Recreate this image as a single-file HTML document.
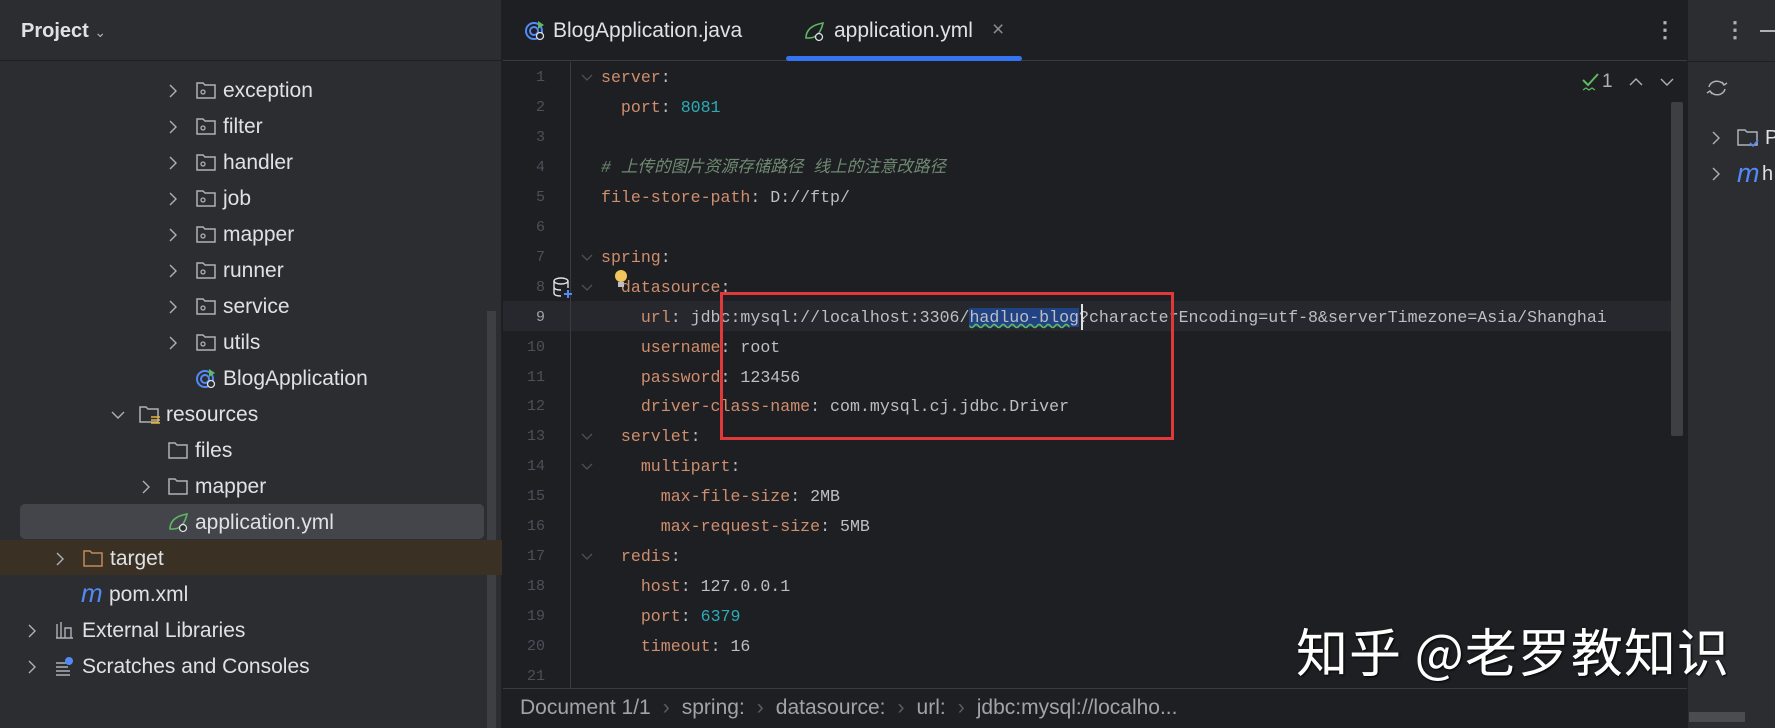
<!DOCTYPE html>
<html><head><meta charset="utf-8"><style>
*{margin:0;padding:0;box-sizing:border-box}
body{width:1775px;height:728px;overflow:hidden;background:#1e1f22;font-family:"Liberation Sans","Noto Sans CJK SC",sans-serif;color:#dfe1e5;position:relative}
.abs{position:absolute}
#left{left:0;top:0;width:502px;height:728px;background:#2b2d30;border-right:1px solid #1e1f22}
.hdr{left:0;top:0;width:502px;height:61px;border-bottom:1px solid #1e1f22}
.row{position:absolute;height:36px;line-height:36px;font-size:21px;color:#dfe1e5;white-space:nowrap}
.code{font-family:"Liberation Mono","Noto Sans CJK SC",monospace;font-size:16.6px;white-space:pre;position:absolute;left:601px;height:30px;line-height:30px}
.ln{position:absolute;width:40px;left:505px;text-align:right;font-family:"Liberation Mono",monospace;font-size:15px;color:#4b5059;height:30px;line-height:30px}
.k{color:#cf8e6d}.v{color:#bcbec4}.n{color:#2aacb8}.c{color:#6f8a73;font-style:italic}
.sep{color:#5a5d63;margin:0 12px}
</style></head><body>
<div id="left" class="abs"></div>
<div class="abs hdr"></div>
<div class="abs" style="left:21px;top:20px;font-size:20px;font-weight:bold;color:#dfe1e5">Project <span style="font-weight:normal;font-size:14px;color:#aeb1b8">&#8964;</span></div>
<div class="abs" style="left:487px;top:311px;width:9px;height:417px;background:#3d3f43"></div>
<div class="abs" style="left:20px;top:504px;width:464px;height:35px;background:#43454a;border-radius:5px"></div>
<div class="abs" style="left:0;top:540px;width:502px;height:35px;background:#3a3024"></div>

<div id="tree"></div>
<script>
const items=[
["exception",91,173,223,"pkg",1],["filter",127,173,223,"pkg",1],["handler",163,173,223,"pkg",1],["job",199,173,223,"pkg",1],["mapper",235,173,223,"pkg",1],["runner",271,173,223,"pkg",1],["service",307,173,223,"pkg",1],["utils",343,173,223,"pkg",1],
["BlogApplication",379,0,223,"app",0],["resources",415,118,166,"res",2],["files",451,0,195,"dir",0],["mapper",487,146,195,"dir",1],["application.yml",523,0,195,"yml",0],
["target",559,60,110,"tdir",1],["pom.xml",595,0,109,"m",0],["External Libraries",631,32,82,"lib",1],["Scratches and Consoles",667,32,82,"scr",1]];
let h='';
for(const [t,y,cx,tx,ic,ch] of items){
 const top=y-18;
 if(ch==1)h+=`<svg class="abs" style="left:${cx-6}px;top:${top+11}px" width="12" height="14"><path d="M3 1l6 6-6 6" fill="none" stroke="#aeb1b8" stroke-width="1.4"/></svg>`;
 if(ch==2)h+=`<svg class="abs" style="left:${cx-7}px;top:${top+12}px" width="14" height="12"><path d="M1 3l6 6 6-6" fill="none" stroke="#aeb1b8" stroke-width="1.4"/></svg>`;
 let s='';
 if(ic=="pkg")s=`<path d="M2 4h6l2 2h10v13H2z" fill="none" stroke="#aeb1b8" stroke-width="1.5"/><circle cx="8" cy="13" r="2" fill="none" stroke="#aeb1b8" stroke-width="1.3"/>`;
 if(ic=="dir"||ic=="res")s=`<path d="M2 4h6l2 2h10v13H2z" fill="none" stroke="#aeb1b8" stroke-width="1.5"/>`+(ic=="res"?`<path d="M13 14h9M13 17h9M13 20h9" stroke="#e3b341" stroke-width="1.6"/>`:'');
 if(ic=="tdir")s=`<path d="M2 4h6l2 2h10v13H2z" fill="none" stroke="#c08a5d" stroke-width="1.5"/>`;
 if(ic=="app")s=`<circle cx="10" cy="12" r="8" fill="none" stroke="#548af7" stroke-width="2"/><circle cx="10" cy="12" r="4" fill="none" stroke="#548af7" stroke-width="2"/><path d="M14 2l6 4-6 4z" fill="#5fb865"/><circle cx="16" cy="17" r="3.5" fill="#2b2d30" stroke="#dfe1e5" stroke-width="1.3"/>`;
 if(ic=="yml")s=`<path d="M3 18c0-8 6-13 17-15-2 9-6 15-14 15z" fill="none" stroke="#5fb865" stroke-width="1.6"/><circle cx="16" cy="17" r="3.5" fill="#2b2d30" stroke="#dfe1e5" stroke-width="1.3"/>`;
 if(ic=="m")s=`<text x="0" y="19" font-family="Liberation Sans" font-style="italic" font-size="26" fill="#548af7">m</text>`;
 if(ic=="lib")s=`<path d="M3 5v14M7 3v16M11 9h6v10h-6zM2 19h17" fill="none" stroke="#aeb1b8" stroke-width="1.4"/>`;
 if(ic=="scr")s=`<path d="M2 8h10M2 12h12M2 16h14M2 20h14" stroke="#aeb1b8" stroke-width="1.5"/><circle cx="15" cy="6" r="4" fill="#548af7"/>`;
 h+=`<svg class="abs" style="left:${tx-28}px;top:${top+6}px" width="26" height="24">${s}</svg>`;
 h+=`<div class="row" style="left:${tx}px;top:${top}px">${t}</div>`;
}
document.getElementById('tree').innerHTML=h;
</script>

<div class="abs" style="left:503px;top:0;width:1184px;height:61px;background:#1e1f22;border-bottom:1px solid #393b40"></div>
<svg class="abs" style="left:523px;top:19px" width="24" height="24"><circle cx="11" cy="12" r="8" fill="none" stroke="#548af7" stroke-width="2"/><circle cx="11" cy="12" r="4" fill="none" stroke="#548af7" stroke-width="2"/><path d="M15 2l6 4-6 4z" fill="#5fb865"/><circle cx="17" cy="17" r="3.5" fill="#1e1f22" stroke="#dfe1e5" stroke-width="1.3"/></svg>
<div class="abs" style="left:553px;top:19px;font-size:21px;color:#dfe1e5">BlogApplication.java</div>
<svg class="abs" style="left:803px;top:19px" width="26" height="24"><path d="M3 19c0-8 6-13 17-15-2 9-6 15-14 15z" fill="none" stroke="#5fb865" stroke-width="1.6"/><circle cx="16" cy="18" r="3.5" fill="#1e1f22" stroke="#dfe1e5" stroke-width="1.3"/></svg>
<div class="abs" style="left:834px;top:19px;font-size:21px;color:#dfe1e5">application.yml</div>
<div class="abs" style="left:992px;top:18px;font-size:21px;color:#868a91">×</div>
<div class="abs" style="left:786px;top:56px;width:236px;height:5px;background:#3574f0;border-radius:3px"></div>
<div class="abs" style="left:1654px;top:17px;font-size:22px;color:#aeb1b8;font-weight:bold">⋮</div>

<div class="abs" style="left:503px;top:301px;width:1168px;height:30px;background:#26282e"></div>
<div class="abs" style="left:570px;top:62px;width:1px;height:626px;background:#393b40"></div>
<div class="abs" style="left:1671px;top:102px;width:12px;height:334px;background:#3d3f43;border-radius:2px"></div>
<div id="code"></div>
<script>
const L=[
'<span class="k">server</span><span class="v">:</span>',
'  <span class="k">port</span><span class="v">: </span><span class="n">8081</span>',
'',
'<span class="c"># 上传的图片资源存储路径 线上的注意改路径</span>',
'<span class="k">file-store-path</span><span class="v">: D://ftp/</span>',
'',
'<span class="k">spring</span><span class="v">:</span>',
'  <span class="k">datasource</span><span class="v">:</span>',
'    <span class="k">url</span><span class="v">: jdbc:mysql://localhost:3306/<span style="background:#214283;text-decoration:underline wavy #5fb865">hadluo-blog</span>?characterEncoding=utf-8&amp;serverTimezone=Asia/Shanghai</span>',
'    <span class="k">username</span><span class="v">: root</span>',
'    <span class="k">password</span><span class="v">: 123456</span>',
'    <span class="k">driver-class-name</span><span class="v">: com.mysql.cj.jdbc.Driver</span>',
'  <span class="k">servlet</span><span class="v">:</span>',
'    <span class="k">multipart</span><span class="v">:</span>',
'      <span class="k">max-file-size</span><span class="v">: 2MB</span>',
'      <span class="k">max-request-size</span><span class="v">: 5MB</span>',
'  <span class="k">redis</span><span class="v">:</span>',
'    <span class="k">host</span><span class="v">: 127.0.0.1</span>',
'    <span class="k">port</span><span class="v">: </span><span class="n">6379</span>',
'    <span class="k">timeout</span><span class="v">: 16</span>',
''];
const folds=[1,7,8,13,14,17];
let c='';
L.forEach((s,i)=>{const y=63+i*29.95;
 c+=`<div class="ln" style="top:${y}px;${i==8?'color:#a1a3ab':''}">${i+1}</div>`;
 c+=`<div class="code" style="top:${y}px">${s}</div>`;
 if(folds.includes(i+1))c+=`<svg class="abs" style="left:580px;top:${y+10}px" width="14" height="10"><path d="M2 2l5 5 5-5" fill="none" stroke="#4b5059" stroke-width="1.3"/></svg>`;
});
document.getElementById('code').innerHTML=c;
</script>
<div class="abs" style="left:1081px;top:304px;width:2px;height:26px;background:#dfe1e5"></div>
<svg class="abs" style="left:552px;top:276px" width="22" height="24"><ellipse cx="9" cy="5" rx="7" ry="3" fill="none" stroke="#dfe1e5" stroke-width="1.4"/><path d="M2 5v12c0 2 3 3 7 3M16 5v7M2 11c0 2 3 3 7 3" fill="none" stroke="#dfe1e5" stroke-width="1.4"/><path d="M16 14v8M12 18h8" stroke="#548af7" stroke-width="2"/></svg>
<svg class="abs" style="left:613px;top:268px" width="16" height="22"><circle cx="8" cy="8" r="6" fill="#f2c55c"/><rect x="5" y="14" width="6" height="5" fill="#bcbec4"/></svg>
<div class="abs" style="left:720px;top:292px;width:454px;height:148px;border:3px solid #e0393b"></div>
<svg class="abs" style="left:1580px;top:72px" width="22" height="22"><path d="M3 8l5 5 10-11" fill="none" stroke="#5fb865" stroke-width="2"/><path d="M3 18l3-2 3 2 3-2 3 2" fill="none" stroke="#5fb865" stroke-width="1.2"/></svg>
<div class="abs" style="left:1602px;top:71px;font-size:19px;color:#aeb1b8">1</div>
<svg class="abs" style="left:1628px;top:76px" width="16" height="12"><path d="M2 9l6-6 6 6" fill="none" stroke="#aeb1b8" stroke-width="1.4"/></svg>
<svg class="abs" style="left:1659px;top:76px" width="16" height="12"><path d="M2 3l6 6 6-6" fill="none" stroke="#aeb1b8" stroke-width="1.4"/></svg>

<div class="abs" style="left:503px;top:688px;width:1184px;height:40px;background:#1e1f22;border-top:1px solid #393b40"></div>
<div class="abs" style="left:520px;top:696px;font-size:21px;color:#a1a3ab;white-space:pre">Document 1/1<span class="sep">›</span>spring:<span class="sep">›</span>datasource:<span class="sep">›</span>url:<span class="sep">›</span>jdbc:mysql://localho...</div>

<div class="abs" style="left:1687px;top:0;width:88px;height:728px;background:#2b2d30;border-left:1px solid #1e1f22"></div>
<div class="abs" style="left:1687px;top:61px;width:88px;height:1px;background:#1e1f22"></div>
<div class="abs" style="left:1724px;top:17px;font-size:22px;color:#aeb1b8;font-weight:bold">⋮</div>
<div class="abs" style="left:1760px;top:30px;width:15px;height:2px;background:#aeb1b8"></div>
<svg class="abs" style="left:1705px;top:77px" width="24" height="22"><path d="M4 10a8 7 0 0 1 15-2M20 12a8 7 0 0 1-15 2" fill="none" stroke="#aeb1b8" stroke-width="1.5"/><path d="M17 5l2 3 3-2M7 17l-2-3-3 2" fill="none" stroke="#aeb1b8" stroke-width="1.5"/></svg>
<svg class="abs" style="left:1710px;top:131px" width="12" height="14"><path d="M3 1l6 6-6 6" fill="none" stroke="#aeb1b8" stroke-width="1.4"/></svg>
<svg class="abs" style="left:1736px;top:127px" width="26" height="22"><path d="M2 3h7l2 2h10v13H2z" fill="none" stroke="#aeb1b8" stroke-width="1.5"/><path d="M14 16l3 3 5-6" fill="none" stroke="#548af7" stroke-width="1.6"/></svg>
<div class="abs" style="left:1765px;top:127px;font-size:20px">P</div>
<svg class="abs" style="left:1710px;top:167px" width="12" height="14"><path d="M3 1l6 6-6 6" fill="none" stroke="#aeb1b8" stroke-width="1.4"/></svg>
<div class="abs" style="left:1737px;top:158px;font-size:27px;font-style:italic;color:#548af7">m</div>
<div class="abs" style="left:1762px;top:163px;font-size:20px">h</div>
<div class="abs" style="left:1689px;top:712px;width:56px;height:10px;background:#4a4c50"></div>

<div class="abs" style="left:1296px;top:612px;font-size:52px;color:#fff;font-family:'Noto Sans CJK SC',sans-serif;white-space:nowrap;text-shadow:1px 1px 2px #000;letter-spacing:1px">知乎 @老罗教知识</div>
</body></html>
